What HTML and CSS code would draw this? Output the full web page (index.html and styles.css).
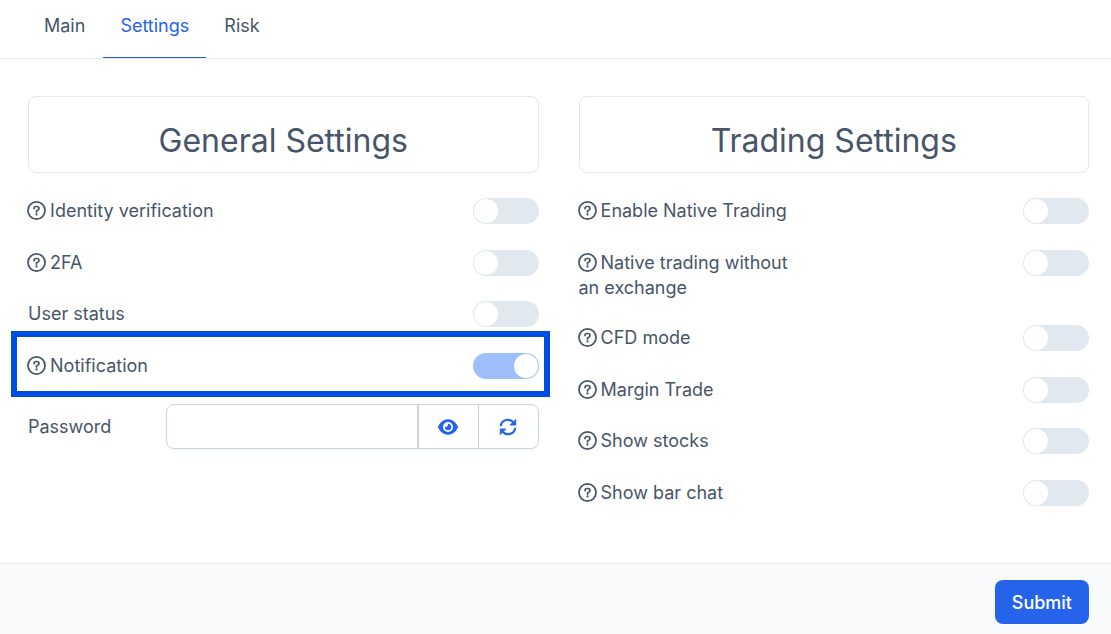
FILE: index.html
```html
<!DOCTYPE html>
<html lang="en">
  <head>
    <meta charset="UTF-8" />
    <meta name="viewport" content="width=device-width, initial-scale=1.0" />
    <title>Settings</title>
    <link rel="stylesheet" href="styles.css">
  </head>
  <body>
    <svg width="0" height="0" class="sprite" aria-hidden="true">
      <symbol id="help" viewBox="0 0 20 20">
        <circle cx="10" cy="10" r="9" fill="none" stroke="currentColor" stroke-width="1.8" />
        <path d="M7.4 8V7.6C7.4 6.5 8.3 5.8 9.4 5.8h1.1c1.2 0 2.1.8 2.1 2 0 .8-.4 1.4-1.1 1.8L10 10.5v1.1" fill="none" stroke="currentColor" stroke-width="1.8" stroke-linecap="round" stroke-linejoin="round" />
        <circle cx="10" cy="14.1" r="1.2" fill="currentColor" />
      </symbol>
    </svg>
    <nav class="tabs">
      <a href="#main" class="tab">Main</a>
      <a href="#settings" class="tab active">Settings</a>
      <a href="#risk" class="tab">Risk</a>
    </nav>
    <form id="settingsForm">
      <main class="columns">
        <section>
          <h2>General Settings</h2>
          <div class="rows">
            <div class="row">
              <label for="identity"><svg class="help"><use href="#help" /></svg> Identity verification</label>
              <input type="checkbox" class="toggle" id="identity" />
            </div>
            <div class="row">
              <label for="twofa"><svg class="help"><use href="#help" /></svg> 2FA</label>
              <input type="checkbox" class="toggle" id="twofa" />
            </div>
            <div class="row">
              <label for="status">User status</label>
              <input type="checkbox" class="toggle" id="status" />
            </div>
            <div class="row highlight">
              <label for="notification"><svg class="help"><use href="#help" /></svg> Notification</label>
              <input type="checkbox" class="toggle" id="notification" checked />
            </div>
            <div class="password-row">
              <label for="password">Password</label>
              <div class="input-group">
                <input type="password" id="password" />
                <button type="button" id="showPassword" aria-label="Show password">
                  <svg width="20" height="18" viewBox="0 0 576 512"><path fill="currentColor" d="M288 32c-80.800 0-145.500 36.800-192.600 80.600C48.600 156 17.300 208 2.500 243.700c-3.300 7.900-3.300 16.700 0 24.600C17.300 304 48.600 356 95.400 399.400 142.500 443.200 207.200 480 288 480s145.500-36.800 192.600-80.600c46.800-43.500 78.100-95.400 93-131.100 3.300-7.900 3.300-16.700 0-24.600-14.900-35.700-46.200-87.700-93-131.100C433.500 68.800 368.800 32 288 32zM144 256a144 144 0 1 1 288 0 144 144 0 1 1-288 0zm144-64c0 35.300-28.700 64-64 64-7.100 0-13.900-1.200-20.300-3.300-5.500-1.800-11.900 1.600-11.700 7.400.3 6.900 1.300 13.800 3.200 20.700 13.700 51.200 66.400 81.600 117.600 67.900s81.600-66.400 67.900-117.600c-11.100-41.500-47.800-69.400-88.600-71.100-5.800-.2-9.200 6.100-7.400 11.700 2.100 6.400 3.300 13.200 3.300 20.300z" /></svg>
                </button>
                <button type="button" id="generatePassword" aria-label="Generate password">
                  <svg width="18" height="18" viewBox="0 0 18 18" fill="none" stroke="currentColor" stroke-width="2.200" stroke-linecap="round" stroke-linejoin="round"><path d="M1.900 7.300A7.200 7.200 0 0 1 14.300 4.300l1.300 1.600M16.100 10.700A7.200 7.200 0 0 1 3.700 13.700l-1.300-1.600" /><path d="M16.700 1.900V7h-5.100zM1.300 16.100V11h5.100z" fill="currentColor" stroke-width="1" /></svg>
                </button>
              </div>
            </div>
          </div>
        </section>
        <section>
          <h2>Trading Settings</h2>
          <div class="rows">
            <div class="row">
              <label for="native"><svg class="help"><use href="#help" /></svg> Enable Native Trading</label>
              <input type="checkbox" class="toggle" id="native" />
            </div>
            <div class="row">
              <label for="noExchange"><svg class="help"><use href="#help" /></svg> Native trading without an exchange</label>
              <input type="checkbox" class="toggle" id="noExchange" />
            </div>
            <div class="row">
              <label for="cfd"><svg class="help"><use href="#help" /></svg> CFD mode</label>
              <input type="checkbox" class="toggle" id="cfd" />
            </div>
            <div class="row">
              <label for="margin"><svg class="help"><use href="#help" /></svg> Margin Trade</label>
              <input type="checkbox" class="toggle" id="margin" />
            </div>
            <div class="row">
              <label for="stocks"><svg class="help"><use href="#help" /></svg> Show stocks</label>
              <input type="checkbox" class="toggle" id="stocks" />
            </div>
            <div class="row">
              <label for="barChat"><svg class="help"><use href="#help" /></svg> Show bar chat</label>
              <input type="checkbox" class="toggle" id="barChat" />
            </div>
          </div>
        </section>
      </main>
      <footer>
        <button type="submit" class="submit">Submit</button>
      </footer>
    </form>
  </body>
</html>
```

FILE: styles.css
```css
* {
  box-sizing: border-box;
}

body {
  margin: 0;
  min-height: 100vh;
  display: flex;
  flex-direction: column;
  background-color: #fff;
  font-family: Inter, sans-serif;
  font-size: 18px;
  line-height: 25px;
  color: #475569;
}

.sprite {
  display: none;
}

.tabs {
  display: flex;
  gap: 1px;
  padding: 0 27px;
  border-bottom: 1px solid #e2e8f0;
}

.tab {
  padding: 13px 17px 19px;
  border-bottom: 1px solid transparent;
  color: #475569;
  text-decoration: none;
}

.tab.active {
  color: #2563eb;
  border-bottom-color: #2563eb;
}

form {
  flex: 1;
  display: flex;
  flex-direction: column;
}

.columns {
  flex: 1;
  display: grid;
  grid-template-columns: repeat(2, minmax(0, 1fr));
  gap: 40px;
  padding: 37px 22px 24px 28px;
}

h2 {
  margin: 0 0 25px;
  padding: 24px 16px 11px;
  border: 1px solid #e2e8f0;
  border-radius: 8px;
  font-size: 32px;
  font-weight: 400;
  line-height: 40px;
  text-align: center;
}

.rows {
  display: flex;
  flex-direction: column;
  gap: 25px;
}

.row {
  position: relative;
  display: flex;
  justify-content: space-between;
  align-items: flex-start;
}

.row:nth-child(odd) {
  min-height: 27px;
}

.row label {
  max-width: 45%;
}

.help {
  width: 19px;
  height: 19px;
  margin-left: -1px;
  margin-right: -1px;
  vertical-align: -3px;
}

.toggle {
  appearance: none;
  flex: none;
  width: 66px;
  height: 26px;
  margin: 0;
  padding: 1px;
  border-radius: 13px;
  background-color: #e2e8f0;
  display: flex;
  cursor: pointer;
}

.toggle::before {
  content: '';
  width: 24px;
  height: 24px;
  border-radius: 50%;
  background-color: #fff;
}

.toggle:checked {
  justify-content: flex-end;
  background-color: #9dbffb;
}

/* frame drawn around the row, over its neighbours */
.highlight::after {
  content: '';
  position: absolute;
  inset: -22px -11px -18px -17px;
  border: 6px solid #004de6;
  pointer-events: none;
}

.password-row {
  display: flex;
  align-items: center;
}

.password-row label {
  flex: none;
  width: 27%;
}

.input-group {
  flex: 1;
  min-width: 0;
  display: flex;
  height: 45px;
  border: 1px solid #cbd5e1;
  border-radius: 8px;
  box-shadow: 0 1px 2px rgba(0, 0, 0, 0.05);
}

.input-group input {
  flex: 1;
  min-width: 0;
  padding: 8px 12px;
  border: none;
  border-right: 1px solid #cbd5e1;
  border-radius: 8px 0 0 8px;
  background-color: transparent;
  font: inherit;
}

.input-group button {
  flex: none;
  width: 60px;
  padding: 0;
  display: flex;
  justify-content: center;
  align-items: center;
  border: none;
  border-left: 1px solid #cbd5e1;
  background-color: transparent;
  color: #2563eb;
  cursor: pointer;
}

footer {
  display: flex;
  justify-content: flex-end;
  padding: 16px 22px 10px;
  border-top: 1px solid #e2e8f0;
  background-color: #f8fafc;
}

.submit {
  height: 44px;
  padding: 0 17px;
  border: none;
  border-radius: 8px;
  background-color: #2563eb;
  color: #fff;
  font: inherit;
  font-weight: 500;
  cursor: pointer;
}
```
